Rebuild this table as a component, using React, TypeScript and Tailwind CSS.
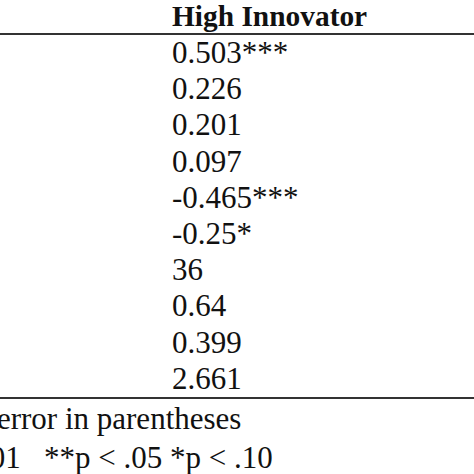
export default function App() {
  const rows = [
    "0.503***",
    "0.226",
    "0.201",
    "0.097",
    "-0.465***",
    "-0.25*",
    "36",
    "0.64",
    "0.399",
    "2.661",
  ];

  return (
    <main
      className="w-[474px] h-[474px] overflow-hidden bg-white text-[#111]"
      style={{ fontFamily: '"Liberation Serif", "Times New Roman", serif' }}
    >
      <div className="h-[33px] pl-[172px] text-[29.4px] leading-[33px] font-bold whitespace-nowrap">
        High Innovator
      </div>
      <div className="border-t-2 border-b-2 border-[#333]">
        {rows.map((r) => (
          <div
            key={r}
            className="h-[36.2px] pl-[172px] text-[31px] leading-[36.2px] whitespace-nowrap"
          >
            {r}
          </div>
        ))}
      </div>
      <div className="text-[31px] leading-[39px] whitespace-pre">
        <div className="ml-[-121px]">Standard error in parentheses</div>
        <div className="ml-[-113px]">***p &lt; .01   **p &lt; .05 *p &lt; .10</div>
      </div>
    </main>
  );
}
